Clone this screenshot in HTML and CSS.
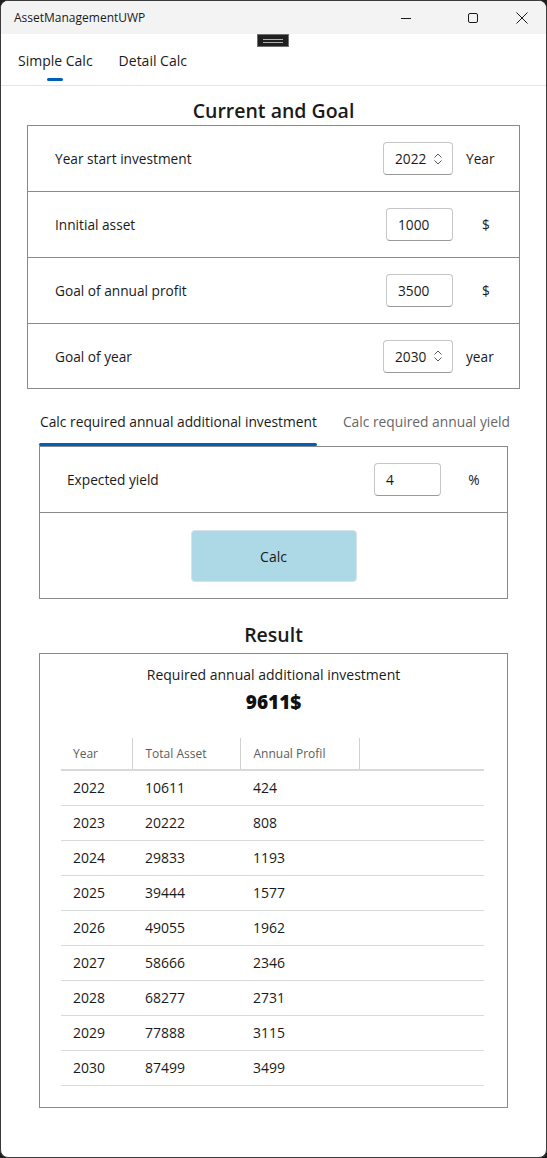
FILE: index.html
```html
<!DOCTYPE html>
<html lang="en">
<head>
<meta charset="utf-8">
<title>AssetManagementUWP</title>
<link rel="stylesheet" href="styles.css">
</head>
<body>
<div class="window">
  <header class="titlebar">
    <span class="app-title">AssetManagementUWP</span>
    <div class="controls">
      <span class="ctrl ctrl-min"><svg width="12" height="12" viewBox="0 0 12 12"><path d="M1 6.5h10" stroke="#1a1a1a" stroke-width="1"/></svg></span>
      <span class="ctrl"><svg width="12" height="12" viewBox="0 0 12 12"><rect x="1.5" y="1.5" width="9" height="9" rx="1.5" fill="none" stroke="#1a1a1a" stroke-width="1"/></svg></span>
      <span class="ctrl ctrl-close"><svg width="12" height="12" viewBox="0 0 12 12"><path d="M0.5 0.5L11.5 11.5M11.5 0.5L0.5 11.5" stroke="#1a1a1a" stroke-width="1"/></svg></span>
    </div>
  </header>
  <nav class="nav">
    <div class="handle"><span></span><span></span></div>
    <a class="nav-item active">Simple Calc</a>
    <a class="nav-item">Detail Calc</a>
  </nav>
  <main class="content">
    <h2 class="section-title">Current and Goal</h2>
    <div class="panel panel-wide">
      <div class="row">
        <span class="label">Year start investment</span>
        <div class="field spin"><span>2022</span><svg class="chev" width="10" height="14" viewBox="0 0 10 14"><path d="M1.5 5.5L5 2l3.5 3.5M1.5 8.5L5 12l3.5-3.5" fill="none" stroke="#5a5a5a" stroke-width="1"/></svg></div>
        <span class="unit">Year</span>
      </div>
      <div class="row">
        <span class="label">Innitial asset</span>
        <div class="field text">1000</div>
        <span class="unit center">$</span>
      </div>
      <div class="row">
        <span class="label">Goal of annual profit</span>
        <div class="field text">3500</div>
        <span class="unit center">$</span>
      </div>
      <div class="row last">
        <span class="label">Goal of year</span>
        <div class="field spin"><span>2030</span><svg class="chev" width="10" height="14" viewBox="0 0 10 14"><path d="M1.5 5.5L5 2l3.5 3.5M1.5 8.5L5 12l3.5-3.5" fill="none" stroke="#5a5a5a" stroke-width="1"/></svg></div>
        <span class="unit">year</span>
      </div>
    </div>

    <div class="tabs">
      <span class="tab active">Calc required annual additional investment</span>
      <span class="tab">Calc required annual yield</span>
    </div>
    <div class="panel panel-narrow">
      <div class="row yield-row">
        <span class="label">Expected yield</span>
        <div class="field text">4</div>
        <span class="unit center">%</span>
      </div>
      <div class="button-row">
        <button class="calc-btn">Calc</button>
      </div>
    </div>

    <h2 class="section-title result-title">Result</h2>
    <div class="panel panel-narrow result">
      <p class="result-label">Required annual additional investment</p>
      <p class="result-value">9611$</p>
      <table class="grid">
        <thead>
          <tr><th class="c1">Year</th><th class="c2">Total Asset</th><th class="c3">Annual Profil</th><th class="c4"></th></tr>
        </thead>
        <tbody>
          <tr><td>2022</td><td>10611</td><td>424</td><td></td></tr>
          <tr><td>2023</td><td>20222</td><td>808</td><td></td></tr>
          <tr><td>2024</td><td>29833</td><td>1193</td><td></td></tr>
          <tr><td>2025</td><td>39444</td><td>1577</td><td></td></tr>
          <tr><td>2026</td><td>49055</td><td>1962</td><td></td></tr>
          <tr><td>2027</td><td>58666</td><td>2346</td><td></td></tr>
          <tr><td>2028</td><td>68277</td><td>2731</td><td></td></tr>
          <tr><td>2029</td><td>77888</td><td>3115</td><td></td></tr>
          <tr><td>2030</td><td>87499</td><td>3499</td><td></td></tr>
        </tbody>
      </table>
    </div>
  </main>
</div>
</body>
</html>
```

FILE: styles.css
```css
* { box-sizing: border-box; }
html, body { margin: 0; padding: 0; }
body {
  background: #1e1e1e;
  font-family: "Open Sans", "Noto Sans", "Liberation Sans", sans-serif;
  color: #1a1a1a;
  width: 547px;
  height: 1158px;
  overflow: hidden;
}
.window {
  width: 547px;
  height: 1158px;
  background: #ffffff;
  border: 1px solid #3a3a3a;
  border-radius: 8px;
  overflow: hidden;
  display: flex;
  flex-direction: column;
}
.titlebar {
  height: 33px;
  background: #f3f3f3;
  display: flex;
  align-items: center;
  justify-content: space-between;
  padding-left: 13px;
  flex-shrink: 0;
}
.app-title {
  font-size: 12px;
  color: #1a1a1a;
}
.controls { display: flex; height: 100%; }
.ctrl {
  width: 48px;
  height: 100%;
  display: flex;
  align-items: center;
  justify-content: center;
}
.ctrl-min { margin-right: 19px; }
.ctrl-close { width: 49px; }
.nav {
  position: relative;
  height: 52px;
  border-bottom: 1px solid #e5e5e5;
  display: flex;
  gap: 26px;
  padding: 17px 0 0 17px;
  flex-shrink: 0;
}
.handle {
  position: absolute;
  left: 256px;
  top: 0;
  width: 32px;
  height: 13px;
  background: #1f1f1f;
  border: 1px solid #707070;
  display: flex;
  flex-direction: column;
  justify-content: center;
  align-items: center;
  gap: 2px;
}
.handle span {
  display: block;
  width: 20px;
  height: 1px;
  background: #b0b0b0;
}
.nav-item {
  display: flex;
  flex-direction: column;
  align-items: center;
  font-size: 14px;
  line-height: 20px;
  color: #1a1a1a;
}
.nav-item::after {
  content: "";
  display: block;
  width: 16px;
  height: 3px;
  margin-top: 7px;
  border-radius: 2px;
  background: transparent;
}
.nav-item.active::after { background: #005fb8; }

.content {
  display: flex;
  flex-direction: column;
}
.section-title {
  margin: 12px 0 1px;
  text-align: center;
  font-size: 19.5px;
  line-height: 26px;
  font-weight: 600;
  color: #1a1a1a;
}
.result-title { margin: 23px 0 5px; }

.panel {
  border: 1px solid #8a8a8a;
  display: flex;
  flex-direction: column;
}
.panel-wide { margin: 0 26px; }
.panel-narrow { margin: 0 38px; }

.row {
  height: 66px;
  border-bottom: 1px solid #8a8a8a;
  display: flex;
  align-items: center;
  padding: 0 13px 0 27px;
  font-size: 13.7px;
}
.row.last { border-bottom: none; height: 64px; }
.label { flex: 1; }
.field {
  height: 33px;
  border: 1px solid #c6c6c6;
  border-bottom-color: #9a9a9a;
  border-radius: 4px;
  display: flex;
  align-items: center;
  font-size: 13.7px;
}
.field.text {
  width: 67px;
  padding-left: 11px;
}
.field.spin {
  width: 70px;
  padding-left: 11px;
  gap: 7px;
}
.chev { flex-shrink: 0; }
.unit {
  width: 40px;
  margin-left: 13px;
}
.unit.center { text-align: center; }

.tabs {
  margin: 0 38px;
  display: flex;
  gap: 25px;
  white-space: nowrap;
  padding-top: 23px;
  height: 57px;
}
.tab {
  font-size: 13.8px;
  line-height: 20px;
  color: #666666;
  padding-left: 1px;
}
.tab.active {
  color: #1a1a1a;
  position: relative;
}
.tab.active::after {
  content: "";
  position: absolute;
  left: 0;
  right: 0;
  top: 31px;
  height: 3px;
  border-radius: 2px;
  background: #005fb8;
}

.yield-row { height: 66px; }
.button-row {
  height: 85px;
  display: flex;
  align-items: center;
  justify-content: center;
}
.calc-btn {
  width: 166px;
  height: 52px;
  background: #add8e6;
  border: 1px solid #d6e4ea;
  border-radius: 4px;
  font-family: inherit;
  font-size: 14px;
  color: #1a1a1a;
  margin-top: 1px;
}

.result {
  padding: 11px 21px 21px;
  align-items: stretch;
}
.result-label {
  margin: 0;
  text-align: center;
  font-size: 14px;
  line-height: 20px;
}
.result-value {
  margin: 4px 0 0;
  text-align: center;
  font-size: 19px;
  line-height: 26px;
  font-weight: 800;
  color: #111;
}
.grid {
  margin-top: 23px;
  border-collapse: collapse;
  width: 423px;
  font-size: 14px;
}
.grid th {
  height: 32px;
  font-size: 12px;
  font-weight: 400;
  color: #5c5c5c;
  text-align: left;
  padding: 0 0 0 13px;
  border-bottom: 2px solid #d9d9d9;
  border-right: 1px solid #d2d2d2;
}
.grid th.c1 { width: 71px; padding-left: 12px; }
.grid th.c2 { width: 108px; }
.grid th.c3 { width: 119px; }
.grid th.c4 { border-right: none; }
.grid td {
  height: 35px;
  padding: 0 0 0 13px;
  border-bottom: 1px solid #d9d9d9;
  color: #1a1a1a;
}
.grid td:first-child { padding-left: 12px; }
```
